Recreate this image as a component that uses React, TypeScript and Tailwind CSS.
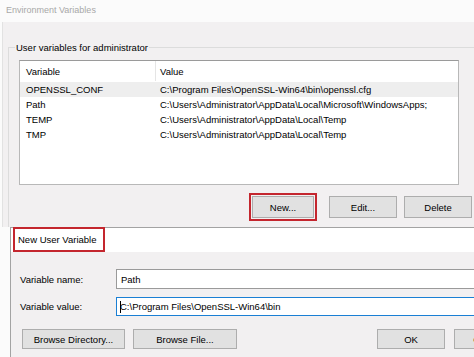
import React from 'react';

const rows = [
  { name: 'OPENSSL_CONF', value: 'C:\\Program Files\\OpenSSL-Win64\\bin\\openssl.cfg', selected: true },
  { name: 'Path', value: 'C:\\Users\\Administrator\\AppData\\Local\\Microsoft\\WindowsApps;' },
  { name: 'TEMP', value: 'C:\\Users\\Administrator\\AppData\\Local\\Temp' },
  { name: 'TMP', value: 'C:\\Users\\Administrator\\AppData\\Local\\Temp' },
];

function WinButton({ label, className = '' }: { label: string; className?: string }) {
  return (
    <div
      className={`flex shrink-0 items-center justify-center whitespace-nowrap bg-[#e1e1e1] border border-[#adadad] text-black ${className}`}
    >
      {label}
    </div>
  );
}

export default function App() {
  return (
    <div
      className="w-[474px] h-[357px] overflow-hidden bg-[#fbfbfb] text-[9.5px] leading-[15px] text-black"
      style={{ fontFamily: '"Liberation Sans", Arial, sans-serif' }}
    >
      {/* Environment Variables window */}
      <div className="h-[22px] pl-[6px] pt-[3px] text-[#a8a8a8] text-[9px]">Environment Variables</div>
      <div className="h-[205px] overflow-hidden bg-[#f2f0f1] border-l border-[#e2e2e2] ml-[2px] pt-[18px]">
        <fieldset className="ml-[5px] mr-[-20px] h-[220px] border border-[#dcdcdc]">
          <legend className="ml-[6px] px-[1px] whitespace-nowrap">User variables for administrator</legend>
          <div className="mt-[5px] ml-[10px] w-[440px] h-[125px] overflow-hidden bg-white border border-[#b8b8b8] border-t-[#9a9a9a]">
            <div className="flex h-[20px] items-center">
              <div className="w-[136px] shrink-0 pl-[6px] border-r border-[#e5e5e5] h-full flex items-center">Variable</div>
              <div className="pl-[4px]">Value</div>
            </div>
            <div className="pt-[1px]">
              {rows.map((r) => (
                <div
                  key={r.name}
                  className={`flex h-[15px] items-center whitespace-nowrap ${r.selected ? 'bg-[#eeeeee]' : ''}`}
                >
                  <div className="w-[137px] shrink-0 pl-[6px]">{r.name}</div>
                  <div className="pl-[3px] shrink-0">{r.value}</div>
                </div>
              ))}
            </div>
          </div>
          <div className="flex mt-[11px] ml-[243px] h-[22px]">
            <div className="ring-2 ring-[#c4262e] ring-offset-[1px] ring-offset-[#f2f0f1]">
              <WinButton label="New..." className="w-[62px] h-[22px]" />
            </div>
            <WinButton label="Edit..." className="w-[68px] ml-[15px]" />
            <WinButton label="Delete" className="w-[68px] ml-[7px]" />
          </div>
        </fieldset>
      </div>

      {/* New User Variable dialog */}
      <div className="ml-[10px] border-l border-t border-[#a3a3a3] h-[130px]">
        <div className="h-[24px] bg-white pl-[2px]">
          <div className="inline-flex h-[25px] w-[92px] -mt-[1px] items-center whitespace-nowrap border-2 border-[#c4262e] pl-[3px]">
            New User Variable
          </div>
        </div>
        <div className="bg-[#f2f0f1] h-[106px] pt-[17px] pl-[9px]">
          <div className="flex items-center h-[20px]">
            <div className="w-[96px] shrink-0 whitespace-nowrap">Variable name:</div>
            <div className="flex-1 h-[20px] bg-white border border-[#9a9a9a] border-r-0 flex items-center pl-[4px]">
              Path
            </div>
          </div>
          <div className="flex items-center h-[19px] mt-[8px]">
            <div className="w-[96px] shrink-0 whitespace-nowrap">Variable value:</div>
            <div className="flex-1 h-[19px] bg-white border border-[#1a7fd4] border-r-0 flex items-center whitespace-nowrap pl-[3px]">
              <span className="w-px h-[12px] bg-black mr-[-1px]" />
              C:\Program Files\OpenSSL-Win64\bin
            </div>
          </div>
          <div className="flex mt-[13px] h-[20px]">
            <WinButton label="Browse Directory..." className="w-[103px] ml-[2px]" />
            <WinButton label="Browse File..." className="w-[104px] ml-[8px]" />
            <WinButton label="OK" className="w-[68px] ml-[140px] border-[#1a7fd4]" />
            <WinButton label="Cancel" className="w-[68px] ml-[9px]" />
          </div>
        </div>
      </div>
    </div>
  );
}
